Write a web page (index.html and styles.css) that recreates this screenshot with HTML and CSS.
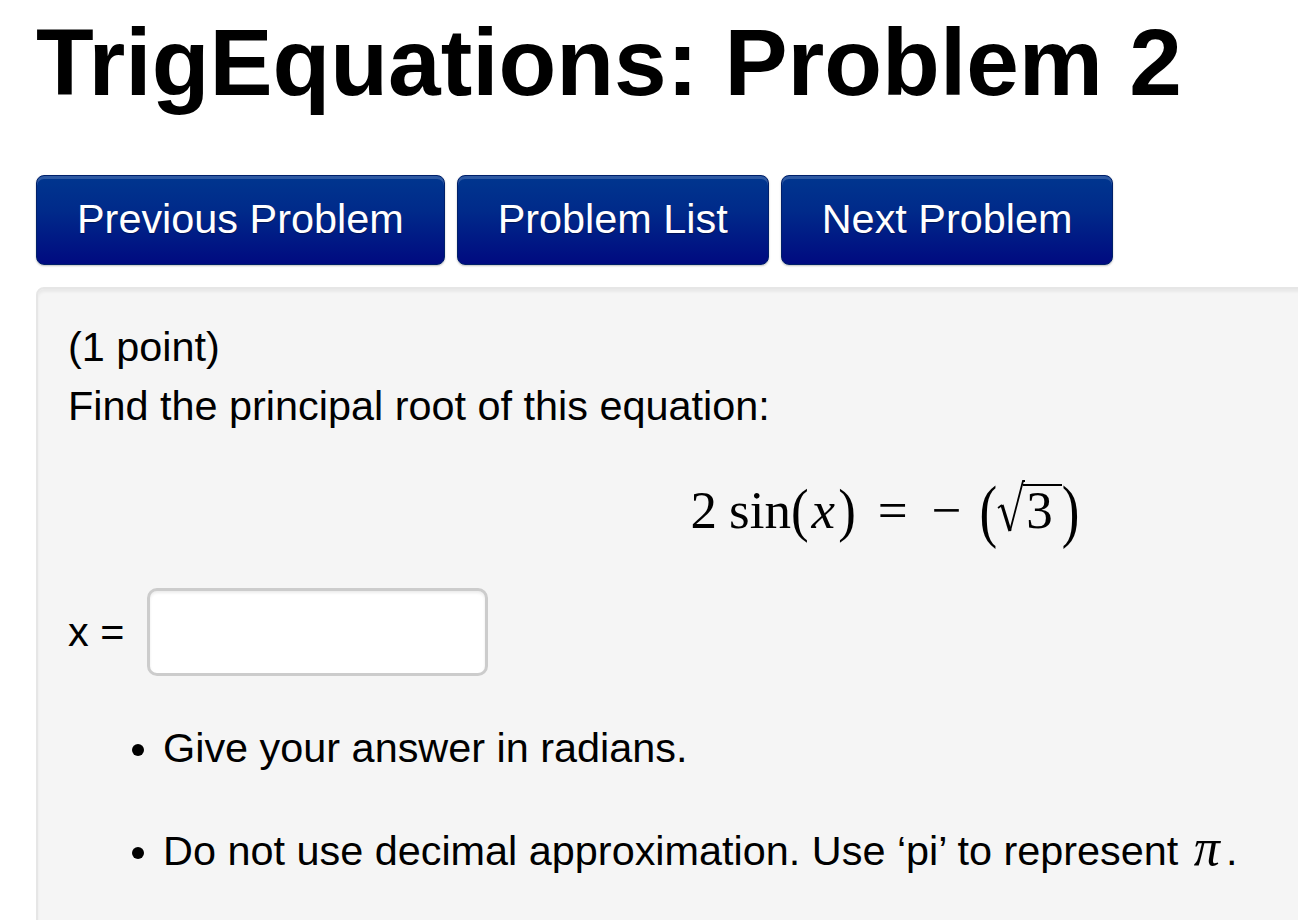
FILE: index.html
```html
<!DOCTYPE html>
<html lang="en">
<head>
    <meta charset="UTF-8">
    <title>TrigEquations: Problem 2</title>
    <link rel="stylesheet" href="styles.css">
</head>
<body>

<h1 class="title">TrigEquations: Problem 2</h1>

<div class="nav">
    <a class="nav-btn" href="#">Previous Problem</a>
    <a class="nav-btn" href="#">Problem List</a>
    <a class="nav-btn" href="#">Next Problem</a>
</div>

<div class="problem">
    <div class="line">(1 point)</div>
    <div class="line">Find the principal root of this equation:</div>

    <div class="display-math">
        <span class="mn">2</span><span class="mi-fn">sin</span><span class="mo">(</span><span class="mi">x</span><span class="mo">)</span><span class="rel">=</span><span class="minus">&minus;</span><span class="big-paren">(</span><span class="sqrt"><svg class="radical" width="28" height="62" viewBox="0 0 28 62"><path d="M1 29 L5 26" fill="none" stroke="#000" stroke-width="1.6"/><path d="M5 26 L13 52" fill="none" stroke="#000" stroke-width="3.2"/><path d="M13 52 L26 2 L28 2" fill="none" stroke="#000" stroke-width="1.8"/></svg><span class="radicand">3</span></span><span class="big-paren">)</span>
    </div>

    <div class="answer-row">
        <span class="answer-label">x =</span>
        <input class="answer" type="text">
    </div>

    <ul class="hints">
        <li>Give your answer in radians.</li>
        <li>Do not use decimal approximation. Use ‘pi’ to represent <span class="pi">π</span>.</li>
    </ul>
</div>

</body>
</html>
```

FILE: styles.css
```css
html {
    overflow: hidden;
}
body {
    margin: 0;
    padding: 0 0 0 36px;
    font-family: "Liberation Sans", Arial, sans-serif;
    font-size: 41.4px;
    line-height: 59px;
    color: #000;
    background: #fff;
}
.title {
    margin: 0;
    padding-top: 11px;
    font-size: 94.6px;
    line-height: 103px;
    font-weight: bold;
}
.nav {
    display: flex;
    gap: 12px;
    margin-top: 61px;
}
.nav-btn {
    display: flex;
    align-items: center;
    box-sizing: border-box;
    height: 90px;
    padding: 0 40px 2px 40px;
    border: 1px solid #00206a;
    border-radius: 8px;
    background: linear-gradient(to bottom, #00368f 0%, #002a8a 40%, #000a80 100%);
    box-shadow: inset 0 3px 0 rgba(255, 255, 255, 0.18), 0 1px 2px rgba(0, 0, 0, 0.25);
    color: #fff;
    text-decoration: none;
    text-shadow: 0 1px 1px rgba(0, 0, 0, 0.4);
}
.problem {
    box-sizing: border-box;
    width: 1698px;
    min-height: 700px;
    margin-top: 22px;
    padding: 29px 30px 0 30px;
    background: #f5f5f5;
    border: 2px solid #e6e6e6;
    border-radius: 8px;
    box-shadow: inset 0 3px 3px rgba(0, 0, 0, 0.05);
}
.display-math {
    margin-top: 34px;
    height: 80px;
    line-height: 80px;
    text-align: center;
    font-family: "Liberation Serif", "Times New Roman", serif;
    font-size: 53px;
    white-space: nowrap;
}
.mi-fn {
    margin-left: 12px;
}
.mo {
    display: inline-block;
    transform: scaleY(1.12);
}
.mi {
    font-style: italic;
    margin: 0 3px;
}
.rel {
    margin: 0 24px 0 22px;
}
.minus {
    margin-right: 18px;
}
.big-paren {
    display: inline-block;
    transform: scaleY(1.32);
}
.sqrt {
    display: inline-block;
    vertical-align: baseline;
}
.radical {
    vertical-align: -13px;
    margin-right: -2px;
}
.radicand {
    display: inline-block;
    border-top: 2px solid #000;
    line-height: 48px;
    padding: 0 9px 0 3px;
}
.answer-row {
    display: flex;
    align-items: center;
    margin-top: 38px;
}
.answer-label {
    margin-right: 23px;
}
.answer {
    box-sizing: border-box;
    width: 341px;
    height: 88px;
    border: 3px solid #cccccc;
    border-radius: 10px;
    background: #fff;
    box-shadow: inset 0 2px 3px rgba(0, 0, 0, 0.08);
    font-size: 41.4px;
    padding: 0 12px;
}
.hints {
    margin: 43px 0 0 0;
    padding-left: 95px;
}
.hints li {
    margin-bottom: 44px;
}
.pi {
    font-family: "Liberation Serif", "Times New Roman", serif;
    font-style: italic;
    font-size: 52px;
    line-height: 0;
    margin: 0 6px 0 4px;
}
```
